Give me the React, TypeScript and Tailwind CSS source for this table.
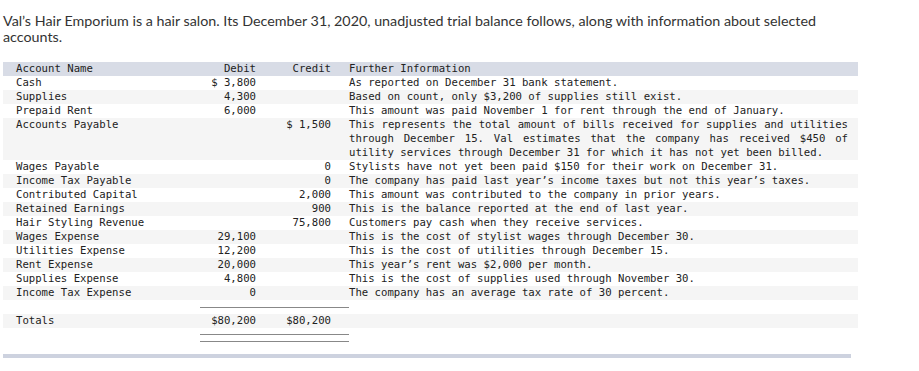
const rows: { name: string; debit?: string; credit?: string; info: string }[] = [
  { name: "Cash", debit: "$ 3,800", info: "As reported on December 31 bank statement." },
  { name: "Supplies", debit: "4,300", info: "Based on count, only $3,200 of supplies still exist." },
  { name: "Prepaid Rent", debit: "6,000", info: "This amount was paid November 1 for rent through the end of January." },
  {
    name: "Accounts Payable",
    credit: "$ 1,500",
    info: "This represents the total amount of bills received for supplies and utilities through December 15. Val estimates that the company has received $450 of utility services through December 31 for which it has not yet been billed.",
  },
  { name: "Wages Payable", credit: "0", info: "Stylists have not yet been paid $150 for their work on December 31." },
  { name: "Income Tax Payable", credit: "0", info: "The company has paid last year’s income taxes but not this year’s taxes." },
  { name: "Contributed Capital", credit: "2,000", info: "This amount was contributed to the company in prior years." },
  { name: "Retained Earnings", credit: "900", info: "This is the balance reported at the end of last year." },
  { name: "Hair Styling Revenue", credit: "75,800", info: "Customers pay cash when they receive services." },
  { name: "Wages Expense", debit: "29,100", info: "This is the cost of stylist wages through December 30." },
  { name: "Utilities Expense", debit: "12,200", info: "This is the cost of utilities through December 15." },
  { name: "Rent Expense", debit: "20,000", info: "This year’s rent was $2,000 per month." },
  { name: "Supplies Expense", debit: "4,800", info: "This is the cost of supplies used through November 30." },
  { name: "Income Tax Expense", debit: "0", info: "The company has an average tax rate of 30 percent." },
];

function Row({ children, shade }: { children: React.ReactNode; shade?: boolean }) {
  return (
    <div className={`grid grid-cols-[197px_62px_87px_1fr] ${shade ? "bg-[#f5f5f5]" : "bg-white"}`}>
      {children}
    </div>
  );
}

export default function App() {
  return (
    <div className="bg-white w-[919px] h-[371px] pt-[13px] text-[#222]">
      <p className="pl-[3px] w-[840px] font-['Lato',sans-serif] text-[14.3px] leading-[16px] text-[#333]">
        Val’s Hair Emporium is a hair salon. Its December 31, 2020, unadjusted trial balance follows, along with information about selected accounts.
      </p>

      <div className="ml-[3px] mt-[17px] w-[855px] font-['DejaVu_Sans_Mono',monospace] text-[10.65px] leading-[14px]">
        <div className="grid grid-cols-[197px_62px_87px_1fr] bg-[#d8dce6]">
          <div className="pl-[13px]">Account Name</div>
          <div className="text-right pr-[6px]">Debit</div>
          <div className="text-right pr-[18px]">Credit</div>
          <div>Further Information</div>
        </div>

        {rows.map((r, i) => (
          <Row key={r.name} shade={i % 2 === 1}>
            <div className="pl-[13px]">{r.name}</div>
            <div className="text-right pr-[6px]">{r.debit}</div>
            <div className="text-right pr-[18px]">{r.credit}</div>
            <div className="pr-[10px] text-justify">{r.info}</div>
          </Row>
        ))}

        <Row>
          <div className="h-[14px]" />
          <div className="col-span-2 flex items-center">
            <div className="w-full h-px bg-[#888]" />
          </div>
          <div />
        </Row>

        <Row shade>
          <div className="pl-[13px]">Totals</div>
          <div className="text-right pr-[6px]">$80,200</div>
          <div className="text-right pr-[18px]">$80,200</div>
          <div />
        </Row>

        <div className="grid grid-cols-[197px_149px_1fr]">
          <div />
          <div className="mt-[6px] h-[8px] border-y border-[#888]" />
          <div />
        </div>
      </div>

      <div className="ml-[3px] mt-[12px] w-[848px] h-[4px] bg-[#cdd2df]" />
    </div>
  );
}
